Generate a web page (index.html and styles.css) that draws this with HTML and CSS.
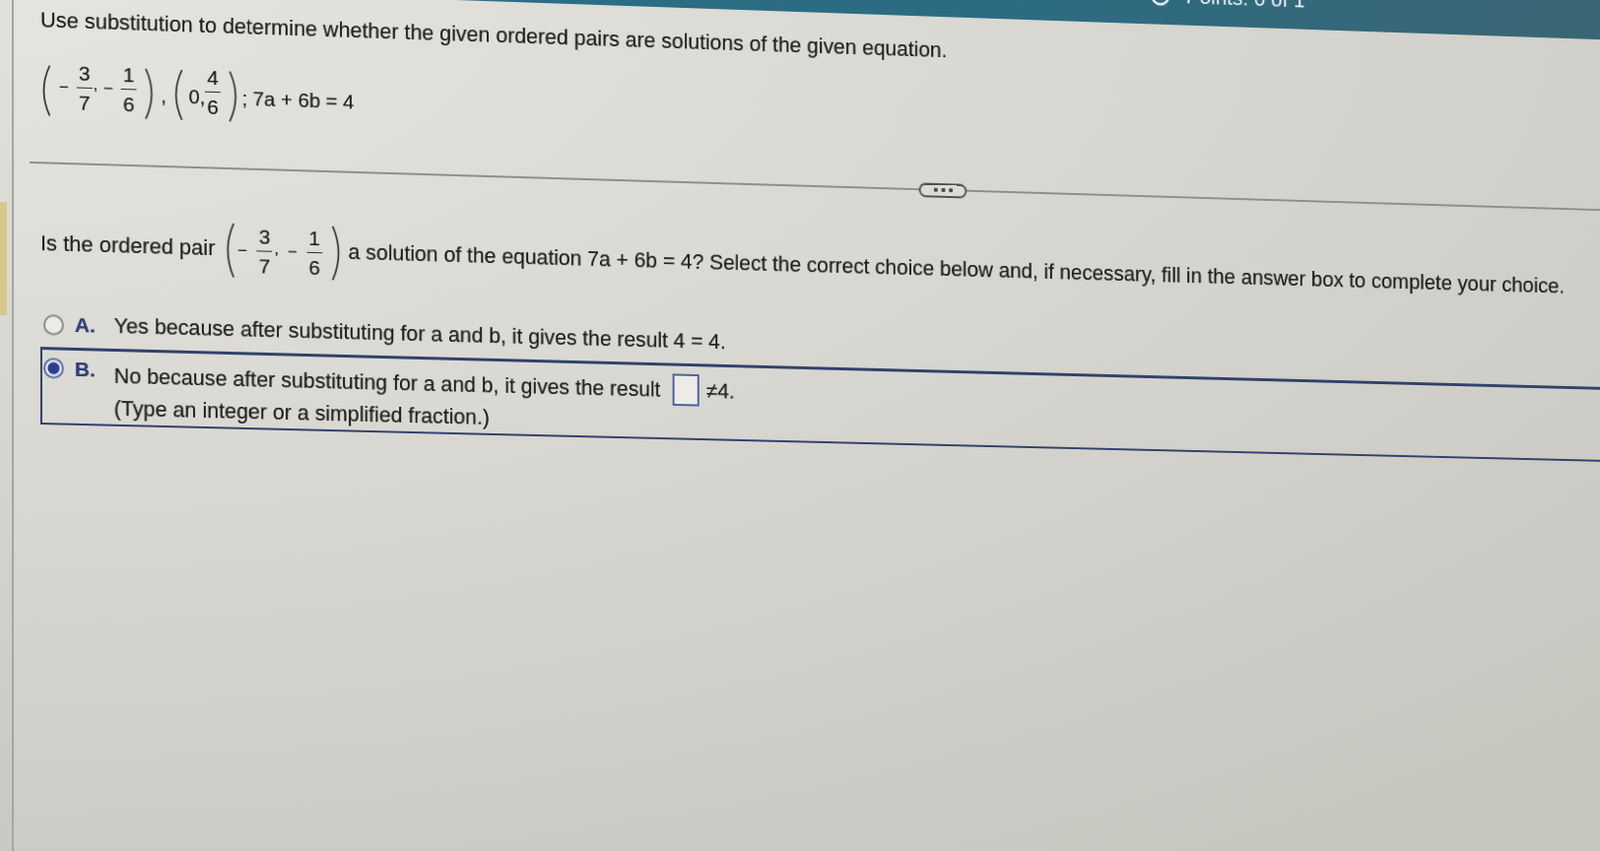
FILE: index.html
```html
<!DOCTYPE html>
<html lang="en">
<head>
<meta charset="utf-8">
<title>Substitution</title>
<link rel="stylesheet" href="styles.css">
</head>
<body>
<div class="screen">
  <div class="sheet">
    <header class="topbar">
      <svg class="save-ring" width="24" height="24" viewBox="0 0 24 24"><circle cx="12" cy="12" r="9"/></svg>
      <span class="points">Points: 0 of 1</span>
    </header>
    <div class="body">
      <div class="gutter"><div class="marker"></div></div>
      <main class="frame">
        <p class="prompt">Use substitution to determine whether the given ordered pairs are solutions of the given equation.</p>
        <div class="mrow given">
          <svg class="pl" width="11" height="53" viewBox="0 0 11 53"><path d="M9.5 1 Q-2.5 26.5 9.5 52"/></svg>
          <span class="sgn">−</span>
          <span class="frac"><span class="num">3</span><span class="den">7</span></span>
          <span class="cm">,</span>
          <span class="sgn">−</span>
          <span class="frac"><span class="num">1</span><span class="den">6</span></span>
          <svg class="pr" width="11" height="53" viewBox="0 0 11 53"><path d="M1.5 1 Q13.5 26.5 1.5 52"/></svg>
          <span class="mt sep">,</span>
          <svg class="pl tight" width="11" height="53" viewBox="0 0 11 53"><path d="M9.5 1 Q-2.5 26.5 9.5 52"/></svg>
          <span class="mt">0,</span>
          <span class="frac"><span class="num">4</span><span class="den">6</span></span>
          <svg class="pr" width="11" height="53" viewBox="0 0 11 53"><path d="M1.5 1 Q13.5 26.5 1.5 52"/></svg>
          <span class="mt eqn">; 7a + 6b = 4</span>
        </div>

        <div class="divider"><button class="more" type="button" aria-label="more"><i></i><i></i><i></i></button></div>

        <div class="mrow question">
          <span class="qt lead">Is the ordered pair</span>
          <svg class="pl" width="11" height="57" viewBox="0 0 11 57"><path d="M9.5 1 Q-2.5 28.5 9.5 56"/></svg>
          <span class="sgn">−</span>
          <span class="frac"><span class="num">3</span><span class="den">7</span></span>
          <span class="cm">,</span>
          <span class="sgn">−</span>
          <span class="frac"><span class="num">1</span><span class="den">6</span></span>
          <svg class="pr" width="11" height="57" viewBox="0 0 11 57"><path d="M1.5 1 Q13.5 28.5 1.5 56"/></svg>
          <span class="qt rest">a solution of the equation 7a + 6b = 4? Select the correct choice below and, if necessary, fill in the answer box to complete your choice.</span>
        </div>

        <div class="choices">
          <div class="choice">
            <span class="radio"></span>
            <span class="label">A.</span>
            <span class="ctext">Yes because after substituting for a and b, it gives the result 4 = 4.</span>
          </div>
          <div class="choice selected">
            <span class="radio on"></span>
            <span class="label">B.</span>
            <div class="ctext">
              <div class="line">No because after substituting for a and b, it gives the result<span class="answer"></span>≠4.</div>
              <div class="hint">(Type an integer or a simplified fraction.)</div>
            </div>
          </div>
        </div>
      </main>
    </div>
  </div>
</div>
</body>
</html>
```

FILE: styles.css
```css
html, body {
  margin: 0;
  padding: 0;
}

body {
  font-family: "Liberation Sans", Arial, sans-serif;
  color: #1d1d1d;
  text-shadow: 0 0 0.5px rgba(20, 20, 20, 0.6);
}

.screen {
  width: 1624px;
  height: 864px;
  overflow: hidden;
  background:
    radial-gradient(140% 120% at 0% 0%, #e5e4df 0%, #d9d8d2 45%, #c7c6bf 100%);
}

/* the photo is taken at a slight angle: one projective transform for the whole sheet */
.sheet {
  width: 1720px;
  margin-top: -96px;
  transform: matrix3d(1, 0.0365, 0, 0.000024, 0, 1, 0, 0, 0, 0, 1, 0, 0, 0, 0, 1);
  transform-origin: 0 0;
}

/* top teal bar */
.topbar {
  height: 80px;
  margin-bottom: 9px;
  box-sizing: border-box;
  padding: 19px 352px 0 0;
  background: linear-gradient(90deg, #2a6f87 0%, #2c6c82 60%, #3b6573 100%);
  display: flex;
  align-items: center;
  justify-content: flex-end;
  gap: 16px;
  color: #eef4f6;
  font-size: 22px;
  text-shadow: none;
}

.save-ring circle {
  fill: none;
  stroke: #eef4f6;
  stroke-width: 2.5;
}

.body {
  display: flex;
}

.gutter {
  width: 12px;
  flex: none;
  background: rgba(0, 0, 0, 0.015);
}

.marker {
  width: 7px;
  height: 115px;
  margin-top: 212px;
  background: #d6c78d;
}

.frame {
  flex: 1;
  min-height: 1000px;
  border-left: 2px solid #a5a5a1;
  padding: 13px 0 0 27px;
}

.prompt {
  margin: 0;
  font-size: 21.9px;
  line-height: 26px;
  white-space: nowrap;
}

/* math rows */
.mrow {
  display: flex;
  align-items: center;
  white-space: nowrap;
}

.pl, .pr {
  flex: none;
}

.pl path, .pr path {
  fill: none;
  stroke: #2c2c2c;
  stroke-width: 1.7;
}

.pl {
  margin-right: 8px;
}

.pl.tight {
  margin-right: 6px;
}

.pr {
  margin-left: 8px;
}

.sgn {
  font-size: 17px;
  line-height: 17px;
  margin-right: 8px;
}

.frac {
  display: inline-flex;
  flex-direction: column;
  align-items: stretch;
  text-align: center;
  font-size: 21px;
  line-height: 18px;
}

.num {
  padding: 0 2px 5px;
  border-bottom: 1.5px solid #2a2a2a;
}

.den {
  padding: 6px 2px 0;
}

.cm {
  font-size: 17px;
  line-height: 17px;
  margin: 0 6px 0 1px;
}

.mt {
  font-size: 20px;
  line-height: 24px;
  padding-top: 3px;
}

.mt.sep {
  margin: 0 6px 0 6px;
}

.mt.eqn {
  margin-left: 3px;
  font-size: 20.6px;
}

.given {
  margin-top: 32px;
  height: 53px;
}

.given .frac {
  margin-bottom: 8px;
}

.given .sgn {
  margin-bottom: 8px;
}

.given .cm {
  margin-bottom: 16px;
}

/* divider with ellipsis */
.divider {
  display: flex;
  align-items: center;
  height: 15px;
  margin: 39.5px 0 0 -11px;
}

.divider::before {
  content: "";
  width: 924px;
  height: 2px;
  background: #8e8e8b;
}

.divider::after {
  content: "";
  flex: 1;
  height: 2px;
  background: #8e8e8b;
}

.more {
  width: 51px;
  height: 15px;
  padding: 0;
  border: 2px solid #4f4f4f;
  border-radius: 8px;
  background: #dcdbd6;
  display: flex;
  align-items: center;
  justify-content: center;
  gap: 4px;
}

.more i {
  width: 4px;
  height: 4px;
  border-radius: 1px;
  background: #4a4a4a;
}

/* question */
.question {
  margin-top: 47.5px;
  height: 57px;
}

.qt {
  line-height: 26px;
  margin-bottom: 4px;
}

.qt.lead {
  font-size: 22px;
  margin-right: 9px;
}

.question .pl {
  margin-right: 3px;
}

.question .sgn {
  margin-right: 10px;
}

.question .cm {
  margin: 0 9px 6px 2px;
}

.question .pr {
  margin-left: 9px;
}

.qt.rest {
  font-size: 21.7px;
  margin-left: 7px;
}

/* choices */
.choices {
  margin-top: 39px;
  font-size: 21.7px;
}

.choice {
  display: flex;
  align-items: center;
  padding-left: 3px;
  line-height: 26px;
  white-space: nowrap;
}

.radio {
  flex: none;
  width: 21px;
  height: 21px;
  box-sizing: border-box;
  border-radius: 50%;
  border: 2px solid #8a8a8a;
  background: #ecebe7;
}

.radio.on {
  border-color: #5f70a6;
  background: radial-gradient(circle, #2b3d92 0 5.5px, #e6e6ea 6.5px);
}

.label {
  width: 40px;
  flex: none;
  margin-left: 11px;
  font-size: 21px;
  font-weight: bold;
  color: #2f3c7c;
}

.choice.selected {
  margin-top: 10px;
  align-items: flex-start;
  width: 1700px;
  padding: 8px 0 4px 1px;
  border-top: 3px solid #31416b;
  border-left: 2px solid #31416b;
  border-bottom: 2.5px solid #31416b;
}

.choice.selected .label {
  line-height: 21px;
}

.line {
  display: flex;
  align-items: center;
  height: 33px;
}

.answer {
  width: 28px;
  height: 33px;
  box-sizing: border-box;
  margin: 0 7px 0 13px;
  border: 2px solid #4d5e9b;
  background: #ecebe8;
}

.hint {
  margin-top: 5px;
  line-height: 24px;
}
```
